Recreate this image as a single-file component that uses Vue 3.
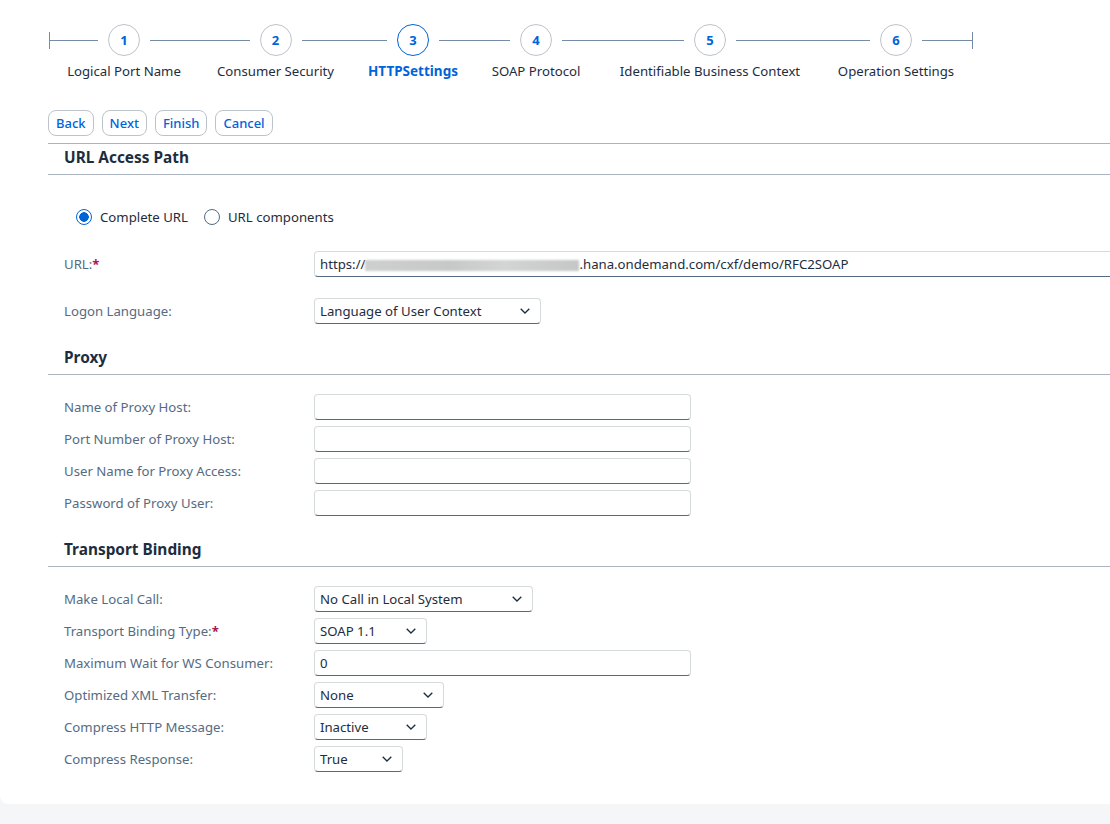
<script setup>
const steps = [
  { n: 1, label: 'Logical Port Name' },
  { n: 2, label: 'Consumer Security' },
  { n: 3, label: 'HTTPSettings', active: true },
  { n: 4, label: 'SOAP Protocol' },
  { n: 5, label: 'Identifiable Business Context' },
  { n: 6, label: 'Operation Settings' }
]

const actions = ['Back', 'Next', 'Finish', 'Cancel']

const proxyFields = [
  'Name of Proxy Host:',
  'Port Number of Proxy Host:',
  'User Name for Proxy Access:',
  'Password of Proxy User:'
]

const bindingFields = [
  { label: 'Make Local Call:', type: 'select', value: 'No Call in Local System', width: 219 },
  { label: 'Transport Binding Type:', type: 'select', value: 'SOAP 1.1', width: 113, required: true },
  { label: 'Maximum Wait for WS Consumer:', type: 'input', value: '0' },
  { label: 'Optimized XML Transfer:', type: 'select', value: 'None', width: 130 },
  { label: 'Compress HTTP Message:', type: 'select', value: 'Inactive', width: 113 },
  { label: 'Compress Response:', type: 'select', value: 'True', width: 89 }
]
</script>

<template>
  <div class="page">
    <div class="card">
      <!-- Wizard steps -->
      <div class="stepper">
        <div v-for="(step, i) in steps" :key="step.n" class="step" :class="{ active: step.active }">
          <div class="step-track">
            <span class="line" :class="{ 'tick-left': i === 0 }"></span>
            <span class="circle">{{ step.n }}</span>
            <span class="line" :class="{ 'tick-right': i === steps.length - 1 }"></span>
          </div>
          <span class="step-label">{{ step.label }}</span>
        </div>
      </div>

      <div class="actions">
        <button v-for="action in actions" :key="action" class="btn">{{ action }}</button>
      </div>

      <h3 class="section-title first">URL Access Path</h3>
      <div class="radios">
        <label class="radio"><span class="dot checked"></span>Complete URL</label>
        <label class="radio"><span class="dot"></span>URL components</label>
      </div>
      <div class="form url-form">
        <span class="label">URL:<em>*</em></span>
        <div class="field url-field">https://<span class="blurred"></span>.hana.ondemand.com/cxf/demo/RFC2SOAP</div>
        <span class="label">Logon Language:</span>
        <div class="field select" style="width: 227px">
          Language of User Context
          <svg class="chevron" viewBox="0 0 10 6" width="10" height="6"><path d="M0.7 0.7 5 5 9.3 0.7" /></svg>
        </div>
      </div>

      <h3 class="section-title">Proxy</h3>
      <div class="form">
        <template v-for="field in proxyFields" :key="field">
          <span class="label">{{ field }}</span>
          <div class="field text"></div>
        </template>
      </div>

      <h3 class="section-title">Transport Binding</h3>
      <div class="form">
        <template v-for="field in bindingFields" :key="field.label">
          <span class="label">{{ field.label }}<em v-if="field.required">*</em></span>
          <div v-if="field.type === 'input'" class="field text">{{ field.value }}</div>
          <div v-else class="field select" :style="{ width: field.width + 'px' }">
            {{ field.value }}
            <svg class="chevron" viewBox="0 0 10 6" width="10" height="6"><path d="M0.7 0.7 5 5 9.3 0.7" /></svg>
          </div>
        </template>
      </div>
    </div>
  </div>
</template>

<style>
html, body {
  margin: 0;
  background: #f5f6f7;
  overflow: hidden;
}
</style>

<style scoped>
.page {
  width: 1110px;
  height: 824px;
  overflow: hidden;
  font-family: "Noto Sans", "Open Sans", sans-serif;
  font-size: 13.2px;
  color: #1d2d3e;
}

.card {
  box-sizing: border-box;
  height: 804px;
  padding: 24px 0 0 48px;
  background: #fff;
  border-bottom-left-radius: 8px;
  overflow: hidden;
}

.stepper {
  display: flex;
  padding-left: 1px;
}

.step {
  display: flex;
  flex-direction: column;
  flex: none;
}

.step:nth-child(1) { width: 150px; }
.step:nth-child(2) { width: 153px; }
.step:nth-child(3) { width: 122px; }
.step:nth-child(4) { width: 124px; }
.step:nth-child(5) { width: 224px; }
.step:nth-child(6) { width: 151px; }

.step:last-child .step-label {
  padding-right: 3px;
}

.step-track {
  display: flex;
  align-items: center;
  height: 32px;
}

.line {
  flex: 1;
  height: 1px;
  background: #758ca4;
  position: relative;
}

.line.tick-right {
  flex: none;
  width: 51px;
}

.tick-left::before,
.tick-right::after {
  content: "";
  position: absolute;
  top: -8px;
  width: 1px;
  height: 17px;
  background: #758ca4;
}

.tick-left::before { left: 0; }
.tick-right::after { right: 0; }

.circle {
  box-sizing: border-box;
  width: 32px;
  height: 32px;
  margin: 0 10px;
  border: 1px solid #bcc3ca;
  border-radius: 50%;
  display: flex;
  align-items: center;
  justify-content: center;
  color: #0064d9;
  font-weight: 700;
  font-size: 13px;
}

.step.active .circle {
  border-color: #0064d9;
}

.step-label {
  margin-top: 6px;
  line-height: 18px;
  text-align: center;
  white-space: nowrap;
}

.step.active .step-label {
  color: #0064d9;
  font-weight: 700;
  font-size: 13.5px;
}

.actions {
  display: flex;
  gap: 8px;
  margin-top: 30px;
}

.btn {
  height: 26px;
  padding: 0 7px;
  border: 1px solid #bcc3ca;
  border-radius: 8px;
  background: #fff;
  color: #0064d9;
  font: inherit;
  font-size: 13px;
  font-weight: 500;
}

.section-title {
  margin: 0;
  height: 30px;
  padding-left: 16px;
  border-bottom: 1px solid #a9b4be;
  font-size: 15.4px;
  font-weight: 700;
  line-height: 28px;
}

.section-title.first {
  margin-top: 7px;
  border-top: 1px solid #a9b4be;
}

.radios {
  display: flex;
  gap: 16px;
  margin-top: 33px;
  padding-left: 28px;
  height: 18px;
}

.radio {
  display: flex;
  align-items: center;
  gap: 8px;
}

.dot {
  box-sizing: border-box;
  width: 16px;
  height: 16px;
  border: 1px solid #556b82;
  border-radius: 50%;
}

.dot.checked {
  border-color: #0064d9;
  background: radial-gradient(circle, #0064d9 0 4.5px, #fff 5px);
}

.form {
  display: grid;
  grid-template-columns: 250px 1fr;
  row-gap: 6px;
  align-items: center;
  padding-left: 16px;
  margin-top: 19px;
  margin-bottom: 20px;
}

.url-form {
  row-gap: 21px;
  margin-top: 25px;
}

.label {
  color: #556b82;
  white-space: nowrap;
}

.label em {
  color: #a5175a;
  font-style: normal;
  font-weight: 700;
}

.field {
  box-sizing: border-box;
  height: 26px;
  display: flex;
  align-items: center;
  padding: 0 5px;
  background: #fff;
  border: 1px solid #d5dadd;
  border-bottom-color: #556b82;
  border-radius: 4px;
  white-space: nowrap;
}

.text {
  width: 377px;
}

.url-field {
  width: 810px;
}

.blurred {
  display: inline-block;
  width: 214px;
  height: 11px;
  margin-top: 2px;
  background: linear-gradient(90deg, #ced0cf, #c6c9c8 40%, #d3d5d4 65%, #c4c7c6);
  filter: blur(1px);
}

.select {
  justify-content: space-between;
  padding-right: 10px;
}

.chevron {
  flex: none;
  fill: none;
  stroke: #1d2d3e;
  stroke-width: 1.3;
}
</style>
